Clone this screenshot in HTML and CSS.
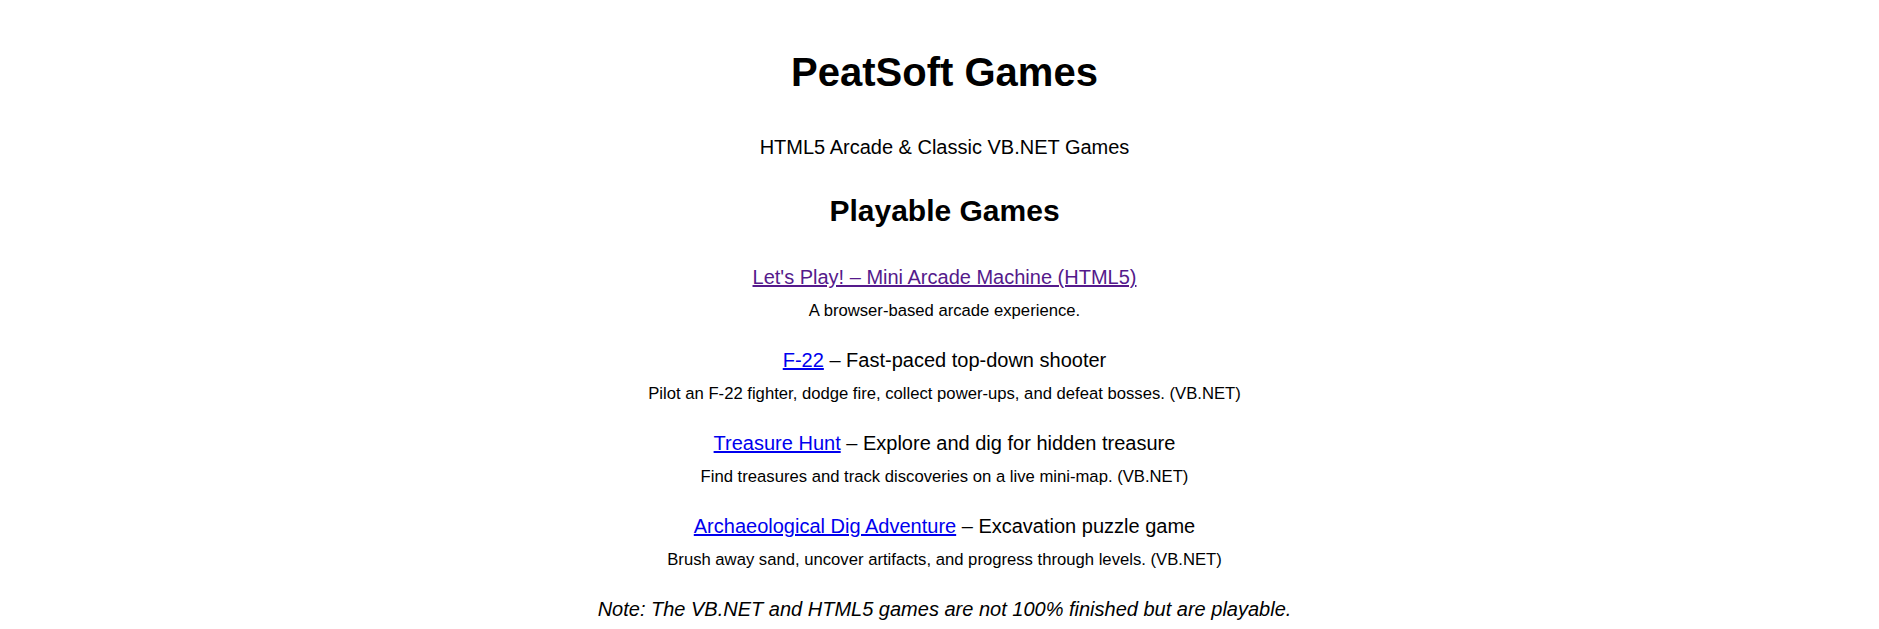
FILE: index.html
```html
<!DOCTYPE html>
<html lang="en">
<head>
<meta charset="utf-8">
<title>PeatSoft Games</title>
<link rel="stylesheet" href="styles.css">
</head>
<body>
  <h1 class="site-title">PeatSoft Games</h1>
  <p class="tagline">HTML5 Arcade &amp; Classic VB.NET Games</p>

  <h2 class="section-title">Playable Games</h2>

  <p class="game">
    <a class="game-link seen" href="#">Let's Play! – Mini Arcade Machine (HTML5)</a><br>
    <small class="game-desc">A browser-based arcade experience.</small>
  </p>

  <p class="game">
    <a class="game-link" href="#">F-22</a> – Fast-paced top-down shooter<br>
    <small class="game-desc">Pilot an F-22 fighter, dodge fire, collect power-ups, and defeat bosses. (VB.NET)</small>
  </p>

  <p class="game">
    <a class="game-link" href="#">Treasure Hunt</a> – Explore and dig for hidden treasure<br>
    <small class="game-desc">Find treasures and track discoveries on a live mini-map. (VB.NET)</small>
  </p>

  <p class="game">
    <a class="game-link" href="#">Archaeological Dig Adventure</a> – Excavation puzzle game<br>
    <small class="game-desc">Brush away sand, uncover artifacts, and progress through levels. (VB.NET)</small>
  </p>

  <p class="note"><em>Note: The VB.NET and HTML5 games are not 100% finished but are playable.</em></p>
</body>
</html>
```

FILE: styles.css
```css
html {
  background: #ffffff;
}

body {
  margin: 0;
  padding: 13px 0 0 10px;
  font-family: "Liberation Sans", Arial, sans-serif;
  font-size: 20px;
  line-height: 1.6;
  color: #000000;
  text-align: center;
}

.site-title {
  font-size: 40px;
  font-weight: bold;
  margin: 26.8px 0;
}

.tagline {
  margin: 20px 0;
}

.section-title {
  font-size: 30px;
  font-weight: bold;
  margin: 24.9px 0 26px;
}

.game {
  margin: 19px 0;
}

.game-link {
  color: #0000ee;
  text-decoration: underline;
}

.game-link.seen {
  color: #551a8b;
}

.game-desc {
  font-size: 16.67px;
}

.note {
  margin: 19px 0 0;
}
```
